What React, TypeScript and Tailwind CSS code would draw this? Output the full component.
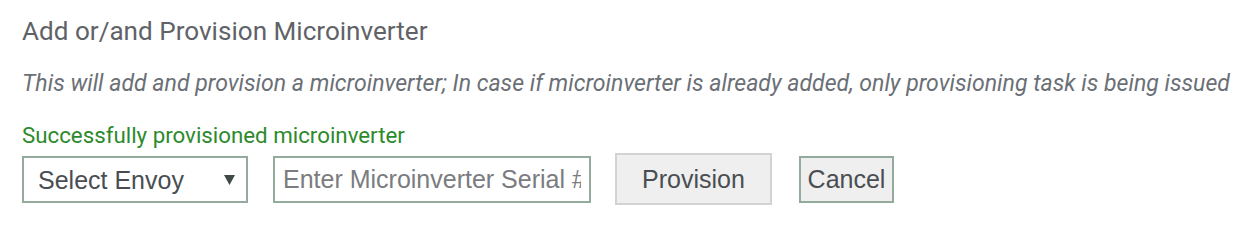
import React from 'react';

const App: React.FC = () => {
  return (
    <div className="w-[1259px] h-[238px] bg-white pl-[22px] pt-[16px]">
      <h2 className="text-[26.1px] leading-[30px] text-[#5f6368] font-['Roboto',sans-serif]">
        Add or/and Provision Microinverter
      </h2>
      <p className="mt-[24px] text-[23.1px] leading-[28px] italic text-[#6b6f76] font-['Roboto',sans-serif] whitespace-nowrap">
        This will add and provision a microinverter; In case if microinverter is already added, only provisioning task is being issued
      </p>
      <div className="mt-[24px] text-[22.3px] leading-[26px] text-[#2c8a2c] font-['Roboto',sans-serif]">
        Successfully provisioned microinverter
      </div>
      <div className="mt-[5px] flex items-center font-['Liberation_Sans',Arial,sans-serif]">
        <div className="relative w-[226px] h-[47px] border-2 border-[#93aa9d] bg-white">
          <span className="absolute left-[14px] top-[8px] text-[25px] leading-[28px] text-[#4a4e52]">Select Envoy</span>
          <svg className="absolute right-[11px] top-[17px]" width="11" height="10" viewBox="0 0 11 10">
            <path d="M0 0 L11 0 L5.5 10 Z" fill="#3f4a44" />
          </svg>
        </div>
        <input
          className="ml-[25px] w-[318px] h-[47px] border-2 border-[#93aa9d] px-[8px] text-[25px] text-[#555] placeholder:text-[#7a7c80] outline-none"
          placeholder="Enter Microinverter Serial #"
        />
        <button className="ml-[24px] w-[157px] h-[52px] pt-[2px] bg-[#efefef] border-2 border-[#d3d3d3] text-[25px] text-[#4a4e52]">
          Provision
        </button>
        <button className="ml-[27px] w-[95px] h-[47px] pt-[2px] bg-[#efefef] border-2 border-[#93aa9d] text-[25px] text-[#4a4e52]">
          Cancel
        </button>
      </div>
    </div>
  );
};

export default App;
